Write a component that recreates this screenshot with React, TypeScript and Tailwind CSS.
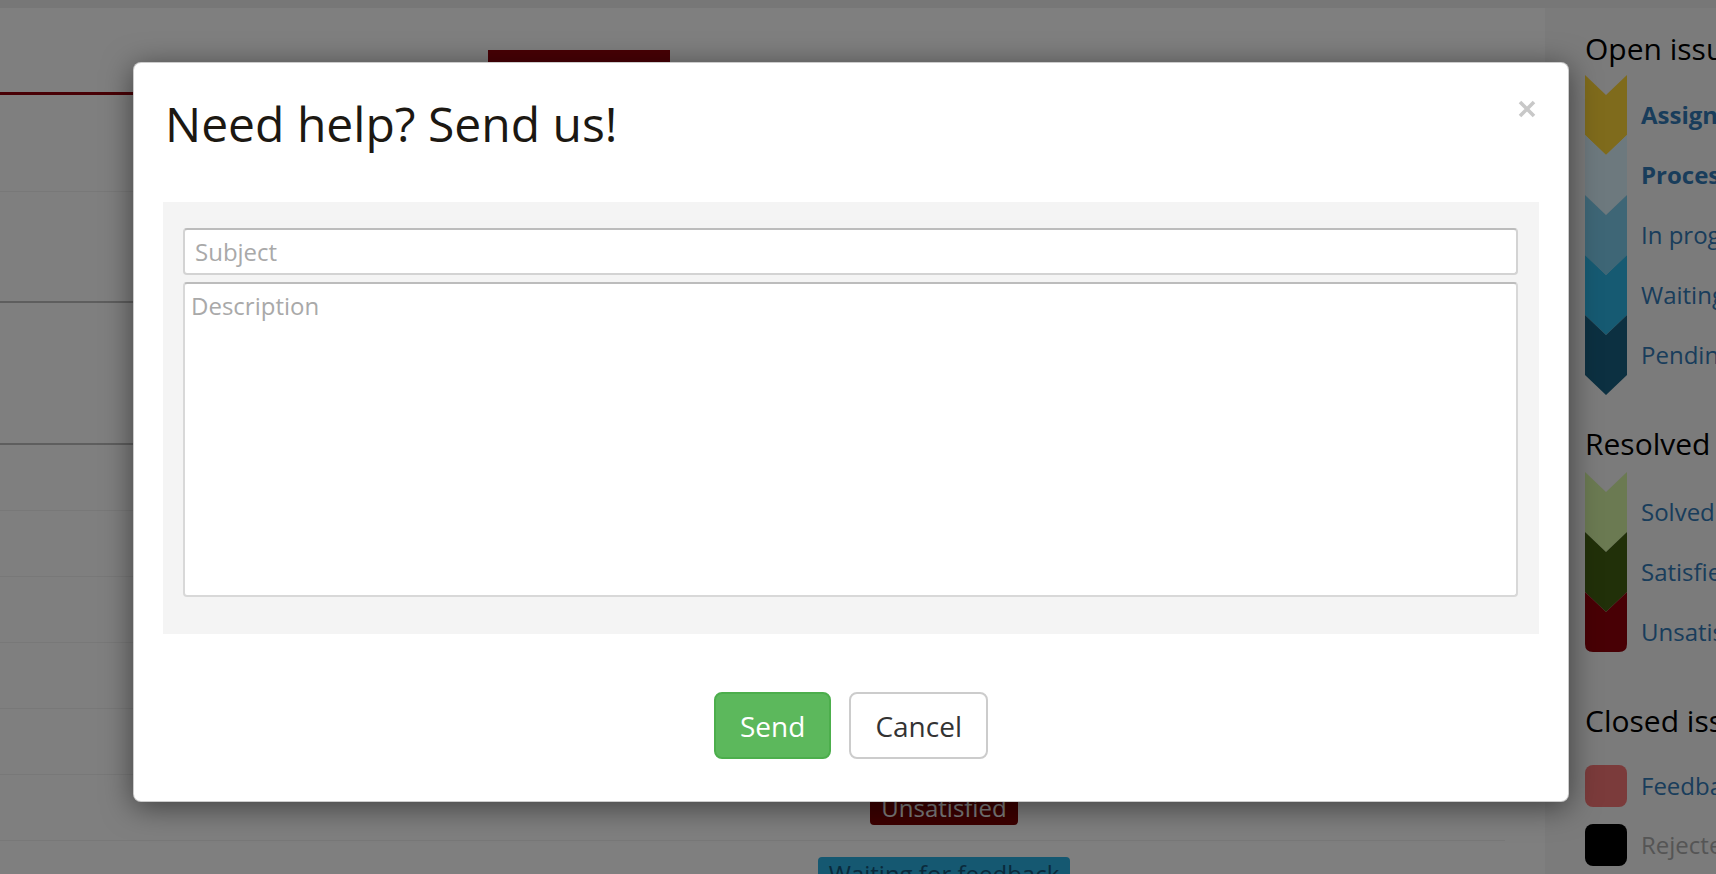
import { useState } from 'react';

const OPEN_ISSUES = [
  { label: 'Assigned', color: '#ffd638', bold: true },
  { label: 'Processing', color: '#daf2fc', bold: true },
  { label: 'In progress', color: '#7cccec', bold: false },
  { label: 'Waiting for feedback', color: '#2cb4e4', bold: false },
  { label: 'Pending', color: '#186082', bold: false },
];

const RESOLVED_ISSUES = [
  { label: 'Solved', color: '#d6f4a4', bold: false },
  { label: 'Satisfied', color: '#426012', bold: false },
  { label: 'Unsatisfied', color: '#90000a', bold: false },
];

const TABLE_ROWS = [
  { status: 'Solved', bg: '#d6f4a4', text: '#2d4a10' },
  { status: 'In progress', bg: '#7cccec', text: '#145478' },
  { status: 'Processing', bg: '#daf2fc', text: '#145478' },
  { status: 'Pending', bg: '#186082', text: '#ffffff' },
  { status: 'Satisfied', bg: '#426012', text: '#ffffff' },
  { status: 'Unsatisfied', bg: '#7a0000', text: '#ffffff' },
  { status: 'Waiting for feedback', bg: '#2ab0e2', text: '#145478' },
];

function Chevron({ color, rounded }: { color: string; rounded?: boolean }) {
  const d = rounded
    ? 'M0 0 L21 20 L42 0 L42 52 Q42 60 34 60 L8 60 Q0 60 0 52 Z'
    : 'M0 0 L21 20 L42 0 L42 60 L21 80 L0 60 Z';
  return (
    <svg width="42" height="60" viewBox="0 0 42 60" className="shrink-0 overflow-visible">
      <path d={d} fill={color} />
    </svg>
  );
}

function LegendRow({ label, color, bold, rounded }: { label: string; color: string; bold: boolean; rounded?: boolean }) {
  return (
    <div className="flex h-[60px] shrink-0">
      <Chevron color={color} rounded={rounded} />
      <span className={`ml-[14px] pt-[23px] text-[24px] leading-[34px] text-[#337ab7] ${bold ? 'font-bold' : 'font-normal'}`}>
        {label}
      </span>
    </div>
  );
}

function Sidebar() {
  return (
    <aside className="w-[171px] shrink-0 bg-[#f6f6f6] pl-[40px] pt-[24px] overflow-hidden whitespace-nowrap">
      <h3 className="text-[30px] leading-[33px] text-black">Open issues</h3>
      <div className="mt-[10px] flex flex-col">
        {OPEN_ISSUES.map((s) => (
          <LegendRow key={s.label} {...s} />
        ))}
      </div>

      <h3 className="mt-[52px] text-[30px] leading-[33px] text-black">Resolved issues</h3>
      <div className="mt-[12px] flex flex-col">
        {RESOLVED_ISSUES.map((s, i) => (
          <LegendRow key={s.label} {...s} rounded={i === RESOLVED_ISSUES.length - 1} />
        ))}
      </div>

      <h3 className="mt-[52px] text-[30px] leading-[33px] text-black">Closed issues</h3>
      <div className="mt-[28px] flex flex-col gap-[17px]">
        <div className="flex h-[42px] shrink-0">
          <div className="w-[42px] h-[42px] rounded-[8px] bg-[#f67676] shrink-0" />
          <span className="ml-[14px] pt-[4px] text-[24px] leading-[34px] text-[#337ab7]">Feedback</span>
        </div>
        <div className="flex h-[42px] shrink-0">
          <div className="w-[42px] h-[42px] rounded-[8px] bg-black shrink-0" />
          <span className="ml-[14px] pt-[4px] text-[24px] leading-[34px] text-[#aaaaaa]">Rejected</span>
        </div>
      </div>
    </aside>
  );
}

function MainContent() {
  return (
    <main className="flex-1 flex flex-col pr-[40px] overflow-hidden">
      {/* Tabs */}
      <div className="h-[87px] shrink-0 border-b-[3px] border-[#90000a] flex">
        <div className="ml-[488px] mt-[42px] w-[182px] h-[42px] bg-[#90000a]" />
      </div>
      <div className="h-[97px] shrink-0 border-b border-[#f0f0f0]" />
      <div className="h-[111px] shrink-0 border-b-2 border-[#bcbcbc]" />
      <div className="h-[142px] shrink-0 border-b-2 border-[#bcbcbc]" />

      {TABLE_ROWS.map((row) => (
        <div key={row.status} className="h-[66px] shrink-0 border-b border-[#f0f0f0] grid grid-cols-[744px_400px_1fr] items-center">
          <div />
          <div className="flex justify-center">
            <span
              className="h-[34px] px-[11px] rounded-[4px] text-[24px] leading-[34px] whitespace-nowrap"
              style={{ backgroundColor: row.bg, color: row.text }}
            >
              {row.status}
            </span>
          </div>
          <div />
        </div>
      ))}
    </main>
  );
}

function HelpModal() {
  const [subject, setSubject] = useState('');
  const [description, setDescription] = useState('');

  return (
    <div className="absolute left-[133px] top-[62px] w-[1436px] bg-white rounded-[8px] border border-black/20 shadow-[0_5px_30px_rgba(0,0,0,0.5)]">
      <button className="absolute top-[37px] right-[32px] w-[18px] h-[18px]" aria-label="Close">
        <svg width="18" height="18" viewBox="0 0 18 18">
          <path d="M2 2 L16 16 M16 2 L2 16" stroke="#c8c8c8" strokeWidth="3.6" />
        </svg>
      </button>

      <div className="pt-[34px] px-[29px]">
        <h1 className="pl-[2px] text-[48px] leading-[53px] font-normal text-[#1c1812]">Need help? Send us!</h1>

        <div className="mt-[52px] bg-[#f4f4f4] pt-[26px] pl-[20px] pr-[21px] pb-[37px] flex flex-col gap-[7px]">
          <input
            value={subject}
            onChange={(e) => setSubject(e.target.value)}
            placeholder="Subject"
            className="h-[47px] w-full bg-white border-2 border-[#d3d3d3] border-t-[#bcbcbc] rounded-[4px] pl-[10px] text-[24px] text-[#333] placeholder:text-[#a9a9a9] outline-none"
          />
          <textarea
            value={description}
            onChange={(e) => setDescription(e.target.value)}
            placeholder="Description"
            className="h-[315px] w-full bg-white border-2 border-[#d8d8d8] border-t-[#bcbcbc] rounded-[4px] pl-[6px] pt-[5px] text-[24px] leading-[34px] text-[#333] placeholder:text-[#a9a9a9] outline-none resize-none"
          />
        </div>
      </div>

      <div className="pt-[58px] pb-[42px] flex justify-center gap-[18px]">
        <button className="h-[67px] px-[24px] rounded-[8px] bg-[#5cb85c] border-2 border-[#4cae4c] text-white text-[28px]">
          Send
        </button>
        <button className="h-[67px] px-[24px] rounded-[8px] bg-white border-2 border-[#cccccc] text-[#333] text-[28px]">
          Cancel
        </button>
      </div>
    </div>
  );
}

export default function App() {
  return (
    <div
      className="relative w-[1716px] h-[874px] overflow-hidden bg-white flex flex-col"
      style={{ fontFamily: '"Open Sans", "Noto Sans", sans-serif' }}
    >
      <div className="h-2 shrink-0 bg-[#eeeeee]" />
      <div className="flex flex-1 min-h-0">
        <MainContent />
        <Sidebar />
      </div>

      {/* Backdrop */}
      <div className="absolute inset-0 bg-black/50" />

      <HelpModal />
    </div>
  );
}
